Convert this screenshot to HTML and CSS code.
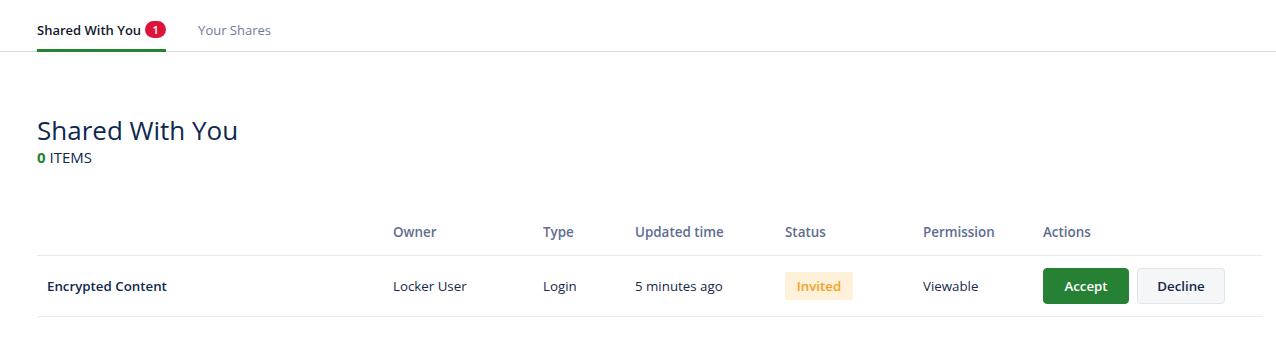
FILE: index.html
```html
<!DOCTYPE html>
<html lang="en">
<head>
<meta charset="utf-8">
<title>Shared With You</title>
<link rel="stylesheet" href="styles.css">
</head>
<body>
<nav class="tabs">
  <div class="tab active">Shared With You <span class="count">1</span></div>
  <div class="tab">Your Shares</div>
</nav>
<main class="content">
  <header class="page-head">
    <h1 class="title">Shared With You</h1>
    <div class="items"><span class="num">0</span> ITEMS</div>
  </header>
  <table class="grid">
    <colgroup>
      <col class="c-name"><col class="c-owner"><col class="c-type"><col class="c-time"><col class="c-status"><col class="c-perm"><col class="c-actions">
    </colgroup>
    <thead>
      <tr>
        <th></th><th>Owner</th><th>Type</th><th>Updated time</th><th>Status</th><th>Permission</th><th>Actions</th>
      </tr>
    </thead>
    <tbody>
      <tr>
        <td class="name">Encrypted Content</td>
        <td>Locker User</td>
        <td>Login</td>
        <td>5 minutes ago</td>
        <td><span class="status">Invited</span></td>
        <td>Viewable</td>
        <td class="actions"><button class="btn accept">Accept</button><button class="btn decline">Decline</button></td>
      </tr>
    </tbody>
  </table>
</main>
</body>
</html>
```
FILE: styles.css
```css
* { box-sizing: border-box; }
html, body { margin: 0; padding: 0; background: #fff; }
body {
  font-family: "Open Sans", "Noto Sans", sans-serif;
  color: #16284a;
  font-size: 14px;
}
.tabs {
  display: flex;
  gap: 32px;
  padding: 0 37px;
  height: 52px;
  border-bottom: 1px solid #d5d9e0;
  align-items: stretch;
}
.tab {
  display: flex;
  align-items: center;
  gap: 4px;
  font-size: 13px;
  color: #6e7c9c;
  padding-top: 10px;
  border-bottom: 3px solid transparent;
  margin-bottom: -1px;
}
.tab.active {
  color: #111a2c;
  font-weight: 600;
  border-bottom-color: #268135;
}
.count {
  display: inline-flex;
  align-items: center;
  justify-content: center;
  min-width: 21px;
  height: 17px;
  padding: 0 6px;
  border-radius: 9px;
  background: #dc143c;
  color: #fff;
  font-size: 11px;
  font-weight: 600;
}
.content { padding: 0 13px 0 37px; }
.page-head { padding-top: 62px; }
.title {
  margin: 0;
  font-size: 26px;
  font-weight: 400;
  line-height: 32px;
  color: #0f2850;
}
.items {
  font-size: 15px;
  line-height: 22px;
  color: #0f2850;
}
.items .num { color: #268135; font-weight: 700; }
.grid {
  width: 100%;
  margin-top: 41px;
  border-collapse: collapse;
  table-layout: fixed;
}
.c-name { width: 346px; }
.c-owner { width: 150px; }
.c-type { width: 92px; }
.c-time { width: 150px; }
.c-status { width: 138px; }
.c-perm { width: 120px; }
th {
  text-align: left;
  font-weight: 600;
  font-size: 13.4px;
  color: #5f6d91;
  padding: 0 10px;
  height: 46px;
  border-bottom: 1px solid #e8eaf0;
}
td {
  font-size: 13.3px;
  color: #16284a;
  padding: 0 10px;
  height: 61px;
  border-bottom: 1px solid #e8eaf0;
}
td.name { font-weight: 600; color: #0f2850; }
.status {
  display: inline-flex;
  align-items: center;
  justify-content: center;
  width: 68px;
  height: 28px;
  background: #fff0d9;
  color: #f5a11f;
  font-weight: 600;
  border-radius: 2px;
}
.actions { white-space: nowrap; }
.btn {
  font-family: inherit;
  font-size: 13.3px;
  font-weight: 600;
  height: 36px;
  border-radius: 4px;
  cursor: pointer;
  vertical-align: middle;
}
.accept {
  width: 86px;
  background: #268135;
  color: #fff;
  border: 1px solid #268135;
}
.decline {
  width: 88px;
  margin-left: 8px;
  background: #f4f6f7;
  color: #16284a;
  border: 1px solid #e1e5ea;
}
```
